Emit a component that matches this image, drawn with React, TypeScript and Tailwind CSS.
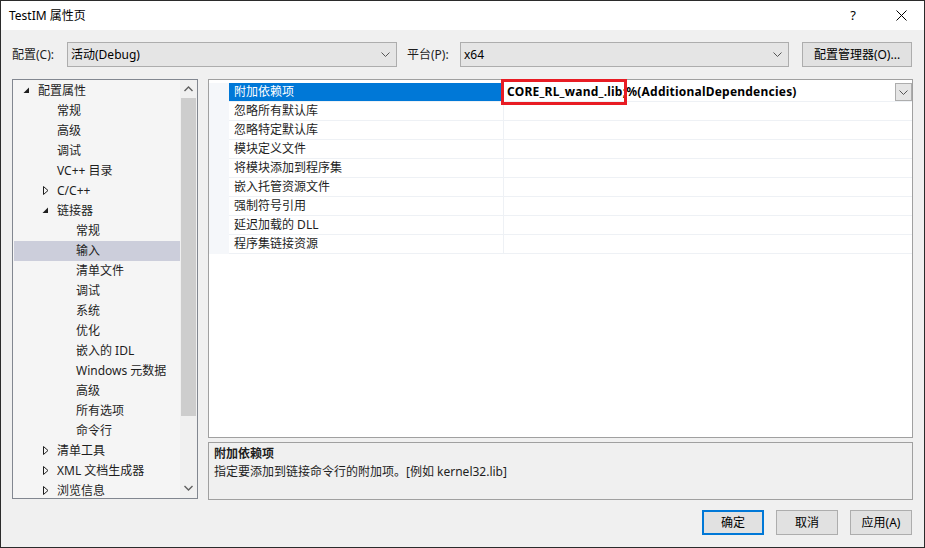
import React from "react";

const font = { fontFamily: '"Noto Sans", "Noto Sans CJK SC", sans-serif' };

type TreeItem = { label: string; level: number; tri?: "open" | "closed"; selected?: boolean };

const tree: TreeItem[] = [
  { label: "配置属性", level: 0, tri: "open" },
  { label: "常规", level: 1 },
  { label: "高级", level: 1 },
  { label: "调试", level: 1 },
  { label: "VC++ 目录", level: 1 },
  { label: "C/C++", level: 1, tri: "closed" },
  { label: "链接器", level: 1, tri: "open" },
  { label: "常规", level: 2 },
  { label: "输入", level: 2, selected: true },
  { label: "清单文件", level: 2 },
  { label: "调试", level: 2 },
  { label: "系统", level: 2 },
  { label: "优化", level: 2 },
  { label: "嵌入的 IDL", level: 2 },
  { label: "Windows 元数据", level: 2 },
  { label: "高级", level: 2 },
  { label: "所有选项", level: 2 },
  { label: "命令行", level: 2 },
  { label: "清单工具", level: 1, tri: "closed" },
  { label: "XML 文档生成器", level: 1, tri: "closed" },
  { label: "浏览信息", level: 1, tri: "closed" },
];

const props = [
  "附加依赖项",
  "忽略所有默认库",
  "忽略特定默认库",
  "模块定义文件",
  "将模块添加到程序集",
  "嵌入托管资源文件",
  "强制符号引用",
  "延迟加载的 DLL",
  "程序集链接资源",
];

function Chevron({ up = false }: { up?: boolean }) {
  return (
    <svg width="9" height="6" viewBox="0 0 9 6">
      <path
        d={up ? "M0.5 5 L4.5 1 L8.5 5" : "M0.5 1 L4.5 5 L8.5 1"}
        fill="none"
        stroke="#606060"
        strokeWidth="1.4"
      />
    </svg>
  );
}

function ComboChevron() {
  return (
    <svg width="9" height="5" viewBox="0 0 9 5">
      <path d="M0.5 0.5 L4.5 4.5 L8.5 0.5" fill="none" stroke="#555" strokeWidth="1" />
    </svg>
  );
}

function Tri({ kind }: { kind: "open" | "closed" }) {
  if (kind === "open") {
    return (
      <svg width="7" height="7" viewBox="0 0 7 7">
        <path d="M6 0.5 L6 6 L0.5 6 Z" fill="#1e1e1e" />
      </svg>
    );
  }
  return (
    <svg width="6" height="9" viewBox="0 0 6 9">
      <path d="M0.5 0.5 L5 4.5 L0.5 8.5 Z" fill="none" stroke="#1e1e1e" strokeWidth="1" />
    </svg>
  );
}

export default function App() {
  return (
    <div
      className="w-[925px] h-[548px] border border-[#2b2b2b] bg-[#f0f0f0] flex flex-col text-[12px] text-[#000] overflow-hidden"
      style={font}
    >
      {/* title bar */}
      <div className="h-[29px] bg-white flex items-center shrink-0">
        <div className="pl-[8px] flex-1 text-[12px]">TestIM 属性页</div>
        <div className="w-[30px] text-center text-[13px] mr-[18px]">?</div>
        <div className="w-[30px] flex justify-center mr-[8px]">
          <svg width="11" height="11" viewBox="0 0 11 11">
            <path d="M0.5 0.5 L10.5 10.5 M10.5 0.5 L0.5 10.5" stroke="#000" strokeWidth="1" />
          </svg>
        </div>
      </div>

      <div className="flex-1 flex flex-col px-[11px]">
        {/* config row */}
        <div className="mt-[12px] h-[25px] flex items-center">
          <div className="w-[55px] text-[#1e1e1e] pt-[1px]">配置(C):</div>
          <div className="w-[330px] h-[25px] border border-[#adadad] bg-[#e5e5e5] flex items-center pl-[3px] pr-[6px]">
            <span className="flex-1 pt-[1px]">活动(Debug)</span>
            <ComboChevron />
          </div>
          <div className="w-[53px] ml-[10px] text-[#1e1e1e] pt-[1px]">平台(P):</div>
          <div className="w-[329px] h-[25px] border border-[#adadad] bg-[#e5e5e5] flex items-center pl-[3px] pr-[6px]">
            <span className="flex-1 pt-[1px]">x64</span>
            <ComboChevron />
          </div>
          <div className="ml-[13px] w-[110px] h-[25px] border border-[#adadad] bg-[#e1e1e1] flex items-center justify-center">
            配置管理器(O)...
          </div>
        </div>

        {/* main */}
        <div className="mt-[12px] flex">
          {/* tree */}
          <div className="w-[186px] h-[420px] border border-[#828790] bg-[#f5f5f5] flex">
            <div className="flex-1 flex flex-col pt-[1px] overflow-hidden">
              {tree.map((t, i) => {
                const triLeft = t.level === 0 ? 10 : 29;
                const textLeft = t.level === 0 ? 25 : t.level === 1 ? 44 : 63;
                return (
                  <div
                    key={i}
                    className={
                      "h-[20px] shrink-0 relative flex items-center text-[#1e1e1e] " +
                      (t.selected ? "bg-[#cccedb] ml-[1px]" : "")
                    }
                  >
                    {t.tri && (
                      <span
                        className="absolute flex items-center"
                        style={{ left: t.tri === "open" ? triLeft : triLeft + 1, top: t.tri === "open" ? 6 : 5 }}
                      >
                        <Tri kind={t.tri} />
                      </span>
                    )}
                    <span style={{ paddingLeft: t.selected ? textLeft - 1 : textLeft }} className="whitespace-nowrap">
                      {t.label}
                    </span>
                  </div>
                );
              })}
            </div>
            <div className="w-[17px] bg-[#f0f0f0] flex flex-col items-center">
              <div className="h-[18px] flex items-center justify-center">
                <Chevron up />
              </div>
              <div className="w-[15px] h-[318px] bg-[#cdcdcd]" />
              <div className="flex-1" />
              <div className="h-[18px] flex items-center justify-center mb-[1px]">
                <Chevron />
              </div>
            </div>
          </div>

          {/* right column */}
          <div className="ml-[10px] w-[705px] flex flex-col">
            <div className="h-[359px] border border-[#a0a0a0] bg-white relative flex flex-col pt-[3px]">
              {props.map((p, i) => (
                <div key={i} className="h-[19px] flex">
                  <div className="w-[20px] bg-[#f5f7fa]" />
                  <div className="flex-1 flex border-b border-[#eef1f5]">
                    <div
                      className={
                        "w-[274px] pl-[5px] flex items-center whitespace-nowrap " +
                        (i === 0 ? "bg-[#0078d7] text-white" : "text-[#1e1e1e]")
                      }
                    >
                      {p}
                    </div>
                    <div className="flex-1 border-l border-[#eef1f5] flex items-center pl-[3px]">
                      {i === 0 && (
                        <>
                          <span className="flex-1 font-bold whitespace-nowrap tracking-[0.22px]">
                            CORE_RL_wand_.lib;%(AdditionalDependencies)
                          </span>
                          <div className="w-[17px] h-[18px] border border-[#adadad] bg-[#e5e5e5] flex items-center justify-center">
                            <ComboChevron />
                          </div>
                        </>
                      )}
                    </div>
                  </div>
                </div>
              ))}
              <div className="absolute left-[292px] top-[-1px] w-[126px] h-[26px] border-[3px] border-[#e81c24]" />
            </div>
            <div className="mt-[4px] h-[58px] border border-[#a0a0a0] bg-[#f0f0f0] pl-[5px] pt-[2px] text-[#1e1e1e]">
              <div className="h-[18px] font-bold flex items-center">附加依赖项</div>
              <div className="h-[18px] flex items-center">指定要添加到链接命令行的附加项。[例如 kernel32.lib]</div>
            </div>
          </div>
        </div>

        {/* buttons */}
        <div className="mt-[10px] flex justify-end gap-[12px] pr-[1px]">
          <div className="w-[62px] h-[25px] border-2 border-[#0078d7] bg-[#e1e1e1] flex items-center justify-center">
            确定
          </div>
          <div className="w-[62px] h-[25px] border border-[#adadad] bg-[#e1e1e1] flex items-center justify-center">
            取消
          </div>
          <div className="w-[62px] h-[25px] border border-[#adadad] bg-[#e1e1e1] flex items-center justify-center">
            应用(A)
          </div>
        </div>
      </div>
    </div>
  );
}
